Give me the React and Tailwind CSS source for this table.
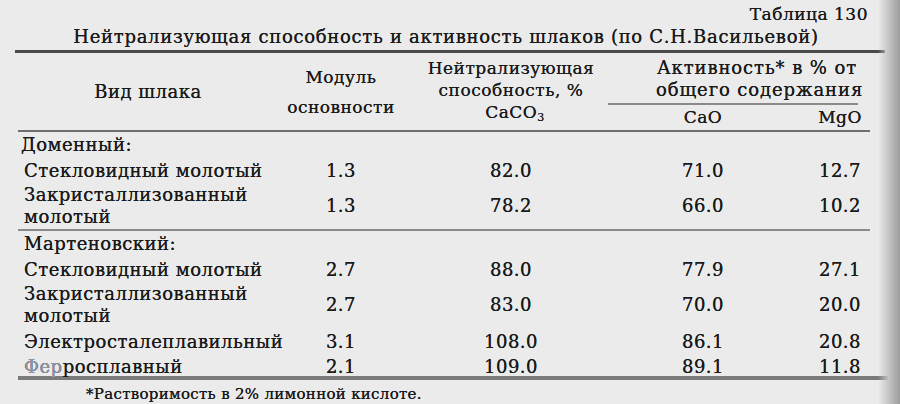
const rowsA = [
  { name: ['Стекловидный молотый'], mod: '1.3', neut: '82.0', cao: '71.0', mgo: '12.7' },
  { name: ['Закристаллизованный', 'молотый'], mod: '1.3', neut: '78.2', cao: '66.0', mgo: '10.2' },
]

const rowsB = [
  { name: ['Стекловидный молотый'], mod: '2.7', neut: '88.0', cao: '77.9', mgo: '27.1' },
  { name: ['Закристаллизованный', 'молотый'], mod: '2.7', neut: '83.0', cao: '70.0', mgo: '20.0' },
  { name: ['Электросталеплавильный'], mod: '3.1', neut: '108.0', cao: '86.1', mgo: '20.8', h: 'h-[25px]' },
  { name: ['Ферросплавный'], mod: '2.1', neut: '109.0', cao: '89.1', mgo: '11.8', h: 'h-[23px]', faded: true },
]

const cols = 'grid grid-cols-[272px_106px_230px_154px_90px]'

function Row({ row }) {
  const tall = row.name.length > 1
  return (
    <div className={`${cols} items-center ${tall ? 'h-[47px]' : row.h || 'h-[25px]'}`}>
      <div className="pl-[6px] leading-[22px] whitespace-nowrap">
        {row.name.map((n, i) =>
          row.faded && i === 0 ? (
            <div key={i}>
              <span className="text-[#8a96aa]">Фер</span>росплавный
            </div>
          ) : (
            <div key={i}>{n}</div>
          )
        )}
      </div>
      <div className="text-center pr-[4px]">{row.mod}</div>
      <div className="text-center">{row.neut}</div>
      <div className="text-center">{row.cao}</div>
      <div className="text-center pl-[30px]">{row.mgo}</div>
    </div>
  )
}

export default function App() {
  return (
    <div className="relative w-[900px] h-[404px] overflow-hidden bg-[#ebebeb] text-[#1a1a1a] font-['DejaVu_Serif',serif] text-[18px] tracking-[0.5px] [text-shadow:0_0_0.5px_#222]">
      <div className="pl-[18px] w-[870px] pt-[3px]">
        <div className="text-right text-[17px] h-[22px] leading-[22px] pr-[2px]">Таблица 130</div>
        <div className="h-[24px] leading-[24px] text-center pl-[4px] whitespace-nowrap tracking-[0.7px]">
          Нейтрализующая способность и активность шлаков (по С.Н.Васильевой)
        </div>
        <div className="h-[3px] bg-[#4a4a4a] w-[870px] -ml-[3px] mt-[1px]" />

        {/* шапка */}
        <div className={`${cols} h-[77px] text-[17px]`}>
          <div className="flex items-center justify-center pr-[12px] text-[18px]">Вид шлака</div>
          <div className="flex flex-col items-center justify-center gap-[10px] leading-[20px] pr-[4px]">
            <div>Модуль</div>
            <div>основности</div>
          </div>
          <div className="flex flex-col items-center pt-[4px] leading-[22px]">
            <div>Нейтрализующая</div>
            <div>способность, %</div>
            <div className="pl-[8px]">
              CaCO<sub className="text-[11px]">3</sub>
            </div>
          </div>
          <div className="col-span-2 flex flex-col pt-[4px] leading-[22px]">
            <div className="border-b-[2px] border-[#8a8a8a] pb-[2px] text-center -ml-[18px] mr-[12px] pl-[48px] text-[18px] tracking-[0.9px] whitespace-nowrap">
              <div>Активность* в % от</div>
              <div>общего содержания</div>
            </div>
            <div className="grid grid-cols-[154px_90px] pt-[1px]">
              <div className="text-center">CaO</div>
              <div className="text-center pl-[30px]">MgO</div>
            </div>
          </div>
        </div>
        <div className="h-[2px] bg-[#6e6e6e]" />

        <div className="h-[25px] leading-[25px] pl-[3px]">Доменный:</div>
        {rowsA.map((r, i) => (
          <Row key={i} row={r} />
        ))}
        <div className="h-[2px] bg-[#8a8a8a]" />

        <div className="h-[25px] leading-[25px] pl-[6px]">Мартеновский:</div>
        {rowsB.map((r, i) => (
          <Row key={i} row={r} />
        ))}
        <div className="h-[4px] bg-[#7a7a7a] w-[870px]" />

        <div className="h-[24px] leading-[24px] pl-[68px] text-[15px] tracking-[0.3px] pt-[2px]">*Растворимость в 2% лимонной кислоте.</div>
      </div>

      {/* тень от корешка справа */}
      <div className="absolute top-0 right-0 h-full w-[22px] bg-gradient-to-r from-transparent via-[#c4c4c4] to-[#9c9c9c]" />
    </div>
  )
}
